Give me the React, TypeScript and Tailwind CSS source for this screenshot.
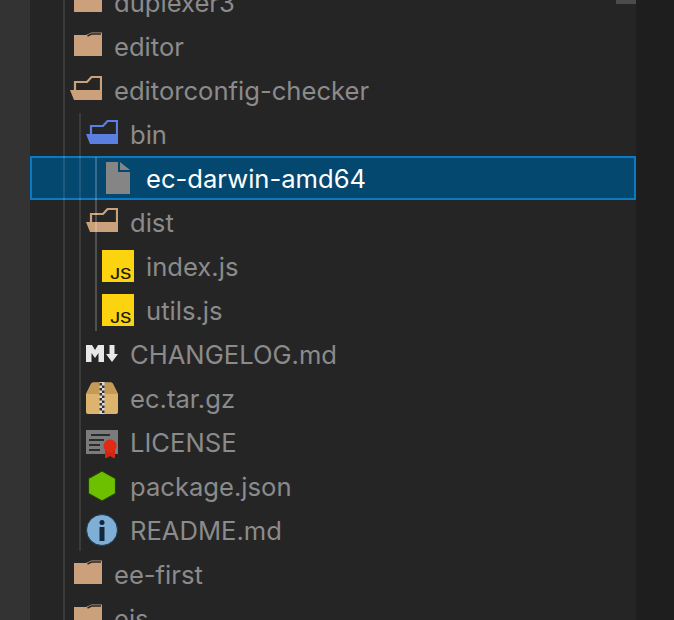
import React from 'react';

function FolderClosed() {
    return (
        <svg width="32" height="32" viewBox="0 0 32 32" className="shrink-0">
            <path d="M4 5h12l5.500-2.500H32V26H4z" fill="#cba17c" />
            <path d="M17.500 6l4-2H31" fill="none" stroke="#2a2522" strokeWidth="1.400" />
        </svg>
    );
}

function FolderOpen({ color = '#cba17c' }: { color?: string }) {
    return (
        <svg width="32" height="32" viewBox="0 0 32 32" className="shrink-0">
            <path d="M5 16V8h12l4.500-5H31v23" fill="none" stroke={color} strokeWidth="2.200" />
            <path d="M0 16h32v10H4z" fill={color} />
        </svg>
    );
}

function FileIcon() {
    return (
        <svg width="32" height="32" viewBox="0 0 32 32" className="shrink-0">
            <path d="M4 0h12v10h12v22H4z" fill="#858585" />
            <path d="M18 0l10 8H18z" fill="#858585" />
        </svg>
    );
}

function JsIcon() {
    return (
        <svg width="32" height="32" viewBox="0 0 32 32" className="shrink-0">
            <rect width="32" height="32" fill="#fbd30f" />
            <text
                x="8"
                y="28.500"
                fontSize="14"
                fontWeight="500"
                textLength="21.500"
                lengthAdjust="spacingAndGlyphs"
                fontFamily="'Inter', sans-serif"
                fill="#1c1a08"
            >
                JS
            </text>
        </svg>
    );
}

function MarkdownIcon() {
    return (
        <svg width="32" height="32" viewBox="0 0 32 32" className="shrink-0">
            <path d="M0 24V7h6l3 5 3-5h6v17h-5.500v-9L9 20l-3.500-5v9z" fill="#e8e8e8" />
            <path d="M23.500 7h5v9h3.500l-6 8-6-8h3.500z" fill="#e8e8e8" />
        </svg>
    );
}

function ZipIcon() {
    return (
        <svg width="32" height="32" viewBox="0 0 32 32" className="shrink-0">
            <path d="M0 12L5 2q.6-1.500 2-1.500h18q1.400 0 2 1.500l5 10v18q0 2-2 2H2q-2 0-2-2z" fill="#dcb46e" />
            <path d="M0 12L5 2q.6-1.500 2-1.500h18q1.400 0 2 1.500l5 10z" fill="#c49a56" />
            <rect x="13.500" width="5" height="32" fill="#d8d8d8" />
            <path d="M13.500 1H16v2.500h-2.500zM16 3.500h2.500V6H16zM13.500 6H16v2.500h-2.500zM16 8.500h2.500V11H16zM13.500 11H16v2.500h-2.500zM16 13.500h2.500V16H16zM13.500 16H16v2.500h-2.500zM16 18.500h2.500V21H16zM13.500 21H16v2.500h-2.500zM16 23.500h2.500V26H16zM13.500 26H16v2.500h-2.500zM16 28.500h2.500V31H16z" fill="#33322e" />
        </svg>
    );
}

function LicenseIcon() {
    return (
        <svg width="32" height="32" viewBox="0 0 32 32" className="shrink-0">
            <rect y="4" width="32" height="24" fill="#7b7b7b" />
            <path d="M5 9h19M3 14h15M3 19h11M3 24h11" fill="none" stroke="#2b2b2b" strokeWidth="2" />
            <path d="M19 22v11l5-3 5 3V22z" fill="#d32512" />
            <circle cx="24" cy="20" r="6.500" fill="#e02a14" />
        </svg>
    );
}

function HexIcon() {
    return (
        <svg width="32" height="32" viewBox="0 0 32 32" className="shrink-0">
            <path d="M16 1l13.500 7.500v15L16 31 2.500 23.500v-15z" fill="#6cc000" stroke="#24420a" strokeWidth="1.200" />
        </svg>
    );
}

function InfoIcon() {
    return (
        <svg width="32" height="32" viewBox="0 0 32 32" className="shrink-0">
            <circle cx="16" cy="16" r="15.500" fill="#7fafd6" stroke="#1f3a50" strokeWidth="1" />
            <circle cx="16" cy="8.500" r="2.500" fill="#15283a" />
            <rect x="13.500" y="13" width="5" height="14" fill="#15283a" />
        </svg>
    );
}

const rows: { label: string; icon: React.ReactNode; pad: string; selected?: boolean }[] = [
    { label: 'duplexer3', icon: <FolderClosed />, pad: 'pl-[40px]' },
    { label: 'editor', icon: <FolderClosed />, pad: 'pl-[40px]' },
    { label: 'editorconfig-checker', icon: <FolderOpen />, pad: 'pl-[40px]' },
    { label: 'bin', icon: <FolderOpen color="#5b7fe0" />, pad: 'pl-[56px]' },
    { label: 'ec-darwin-amd64', icon: <FileIcon />, pad: 'pl-[70px]', selected: true },
    { label: 'dist', icon: <FolderOpen />, pad: 'pl-[56px]' },
    { label: 'index.js', icon: <JsIcon />, pad: 'pl-[72px]' },
    { label: 'utils.js', icon: <JsIcon />, pad: 'pl-[72px]' },
    { label: 'CHANGELOG.md', icon: <MarkdownIcon />, pad: 'pl-[56px]' },
    { label: 'ec.tar.gz', icon: <ZipIcon />, pad: 'pl-[56px]' },
    { label: 'LICENSE', icon: <LicenseIcon />, pad: 'pl-[56px]' },
    { label: 'package.json', icon: <HexIcon />, pad: 'pl-[56px]' },
    { label: 'README.md', icon: <InfoIcon />, pad: 'pl-[56px]' },
    { label: 'ee-first', icon: <FolderClosed />, pad: 'pl-[40px]' },
    { label: 'ejs', icon: <FolderClosed />, pad: 'pl-[40px]' },
];

export default function App() {
    return (
        <div className="flex h-[620px] w-[674px] overflow-hidden bg-[#1e1e1e] font-['Inter',sans-serif]">
            <div className="w-[30px] shrink-0 bg-[#333333]" />
            <div className="relative w-[606px] shrink-0 overflow-hidden bg-[#252526]">
                <div className="-mt-[20px]">
                    {rows.map((row) => (
                        <div
                            key={row.label}
                            className={`flex h-[44px] items-center gap-[12px] text-[25.6px] ${row.pad} ${
                                row.selected
                                    ? 'border-2 border-[#0a7ac4] bg-[#04486f] text-white'
                                    : 'text-[#8b8b8b]'
                            }`}
                        >
                            {row.icon}
                            <span className="mt-[2px]">{row.label}</span>
                        </div>
                    ))}
                </div>
                {/* indent guides */}
                <div className="absolute left-[33px] top-0 h-[620px] w-[2px] bg-white/10" />
                <div className="absolute left-[49px] top-[113px] h-[438px] w-[2px] bg-white/10" />
                <div className="absolute left-[65px] top-[157px] h-[174px] w-[2px] bg-white/20" />
                {/* scrollbar */}
                <div className="absolute right-0 top-0 h-[4px] w-[20px] bg-[#4b4b4b]" />
            </div>
        </div>
    );
}
